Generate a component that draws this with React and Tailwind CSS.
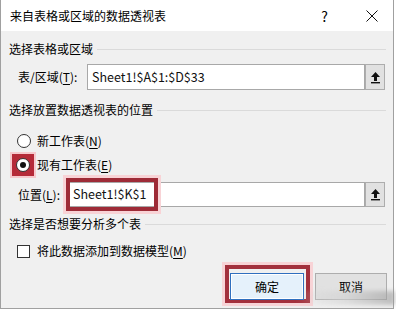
import React from 'react';

const font = { fontFamily: '"Noto Sans CJK SC", "Noto Sans", sans-serif' };

function U({ children }) {
  return <span className="underline underline-offset-2">{children}</span>;
}

function Header({ children }) {
  return (
    <div className="flex h-[18px] items-center pl-[8px] pr-[7px]">
      <span className="text-[12px] leading-none text-black">{children}</span>
      <div className="ml-[4px] h-px flex-1 bg-[#dadada]" />
    </div>
  );
}

function PickButton() {
  return (
    <div className="flex h-full w-[20px] items-center justify-center border border-[#adadad] bg-[#e1e1e1]">
      <svg width="11" height="13" viewBox="0 0 11 13">
        <path d="M5.5 1 L1 6 H4 V10 H7 V6 H10 Z" fill="#111" />
        <rect x="1" y="11" width="9" height="1.4" fill="#111" />
      </svg>
    </div>
  );
}

function RefInput({ value }) {
  return (
    <div className="flex h-full flex-1 items-center border border-[#a8a8a8] bg-white">
      <span className="pl-[4px] text-[12.5px] leading-none text-[#111]">{value}</span>
    </div>
  );
}

export default function App() {
  return (
    <div className="h-[310px] w-[396px] bg-white" style={font}>
      <div className="relative flex h-[309px] w-[394px] flex-col border-b border-l border-r border-[#a0a0a0] bg-[#f0f0f0]">
        {/* title bar */}
        <div className="flex h-[31px] items-center bg-white pl-[9px]">
          <span className="text-[12px] leading-none text-black">来自表格或区域的数据透视表</span>
          <span className="ml-auto mr-[38px] text-[14px] leading-none text-black">?</span>
          <svg width="12" height="12" viewBox="0 0 12 12" className="mr-[15px]">
            <path d="M0.5 0.5 L11.5 11.5 M11.5 0.5 L0.5 11.5" stroke="#111" strokeWidth="1" />
          </svg>
        </div>

        <div className="mt-[9px]">
          <Header>选择表格或区域</Header>
        </div>

        <div className="mt-[6px] flex h-[26px] items-center pl-[17px] pr-[8px]">
          <span className="w-[69px] text-[12px] leading-none text-black">
            表/区域(<U>T</U>):
          </span>
          <RefInput value="Sheet1!$A$1:$D$33" />
          <PickButton />
        </div>

        <div className="mt-[11px]">
          <Header>选择放置数据透视表的位置</Header>
        </div>

        <div className="mt-[12px] flex h-[20px] items-center pl-[16px]">
          <div className="h-[14px] w-[14px] rounded-full border border-[#333] bg-white" />
          <span className="ml-[6px] text-[12px] leading-none text-black">
            新工作表(<U>N</U>)
          </span>
        </div>

        <div className="mt-[4px] flex h-[20px] items-center pl-[11px]">
          <div className="flex h-[22px] w-[22px] items-center justify-center bg-[#b52a38] shadow-[0_0_0_2px_#f6c9cd]">
            <div className="flex h-[14px] w-[14px] items-center justify-center rounded-full border border-[#333] bg-white">
              <div className="h-[6px] w-[6px] rounded-full bg-[#111]" />
            </div>
          </div>
          <span className="ml-[3px] text-[12px] leading-none text-black">
            现有工作表(<U>E</U>)
          </span>
        </div>

        <div className="relative mt-[7px] flex h-[25px] items-center pl-[17px] pr-[8px]">
          <span className="w-[50px] text-[12px] leading-none text-black">
            位置(<U>L</U>):
          </span>
          <RefInput value="Sheet1!$K$1" />
          <PickButton />
          {/* highlight box */}
          <div className="absolute left-[65px] top-[-4px] h-[33px] w-[92px] border-[4px] border-[#9e2b37] shadow-[0_0_0_3px_#f8d3d6]" />
        </div>

        <div className="mt-[8px]">
          <Header>选择是否想要分析多个表</Header>
        </div>

        <div className="mt-[8px] flex h-[20px] items-center pl-[16px]">
          <div className="h-[13px] w-[13px] border border-[#333] bg-white" />
          <span className="ml-[7px] text-[12px] leading-none text-black">
            将此数据添加到数据模型(<U>M</U>)
          </span>
        </div>

        <div className="mt-[12px] flex h-[27px] items-center justify-end gap-[11px] pr-[6px]">
          <div className="relative h-[27px] w-[74px]">
            <div className="absolute left-[-5px] top-[-8px] h-[38px] w-[85px] border-[4px] border-[#a3303c] shadow-[0_0_0_3px_#f8d3d6]" />
            <div className="relative flex h-full w-full items-center justify-center border border-[#2f6fbf] bg-[#e5f1fb] shadow-[inset_0_0_0_1px_#ffffff]">
              <span className="text-[12px] leading-none text-black">确定</span>
            </div>
          </div>
          <div className="flex h-[27px] w-[72px] items-center justify-center border border-[#adadad] bg-[#e1e1e1]">
            <span className="text-[12px] leading-none text-black">取消</span>
          </div>
        </div>

        {/* watermark blur */}
        <div className="absolute bottom-[3px] left-[296px] h-[14px] w-[98px] bg-gradient-to-r from-[#f0f0f0]/0 via-[#d0d0d0] to-[#9a9a9a] opacity-60 blur-[2px]" />
      </div>
    </div>
  );
}
